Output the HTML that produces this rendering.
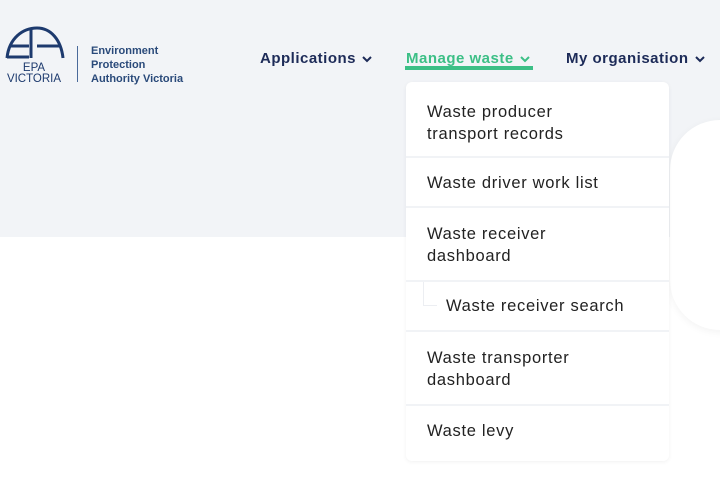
<!DOCTYPE html>
<html><head><meta charset="utf-8"><style>
*{margin:0;padding:0;box-sizing:border-box}
body{width:720px;height:496px;overflow:hidden;background:#fff;font-family:"Liberation Sans",sans-serif;position:relative}
.hdr{position:absolute;left:0;top:0;width:720px;height:237px;background:#f2f4f7}
.card{position:absolute;left:670px;top:120px;width:120px;height:210px;background:#fff;border-radius:50px;box-shadow:0 2px 8px rgba(0,0,0,.05)}
.nav{position:absolute;top:50px;font-weight:bold;font-size:15px;color:#1d2b58;white-space:nowrap;letter-spacing:0.5px}
.nav svg{vertical-align:middle;margin-left:6px}
.green{color:#3cbf86}
.ul{position:absolute;left:405px;top:66px;width:128px;height:4px;background:#3cbf86}
.dd{position:absolute;left:406px;top:82px;width:263px;height:379px;background:#fff;border-radius:6px;box-shadow:0 1px 4px rgba(0,0,0,.06)}
.it{position:absolute;left:0;width:263px;border-bottom:2px solid #f1f3f6;font-size:16.5px;color:#222;line-height:22px;padding-left:21px;letter-spacing:0.7px}
.logo-t{position:absolute;left:91px;top:44px;font-size:11px;line-height:14px;color:#2a4a7a;font-weight:bold}
</style></head><body>
<div class="hdr"></div>
<div class="card"></div>
<svg style="position:absolute;left:3px;top:24px" width="62" height="40" viewBox="0 0 62 40">
<path d="M4 34 C6 14 20 4 34 4 C48 4 58 16 60 34" fill="none" stroke="#1d3a6e" stroke-width="3"/>
<path d="M28 4 V34" stroke="#1d3a6e" stroke-width="3"/>
<path d="M6 22 H26 M4 33 H26" stroke="#1d3a6e" stroke-width="3"/>
<path d="M34 22 H58" stroke="#1d3a6e" stroke-width="3"/>
</svg>
<div style="position:absolute;left:4px;top:63px;width:60px;text-align:center;font-size:11.5px;line-height:11px;color:#1d3a6e">EPA<br>VICTORIA</div>
<div style="position:absolute;left:77px;top:46px;width:1px;height:36px;background:#4a6a9a"></div>
<div class="logo-t">Environment<br>Protection<br>Authority Victoria</div>
<div class="nav" style="left:260px">Applications<svg width="10" height="7" viewBox="0 0 10 7"><path d="M1 1l4 4 4-4" fill="none" stroke="#1d2b58" stroke-width="2"/></svg></div>
<div class="nav green" style="left:406px">Manage waste<svg width="10" height="7" viewBox="0 0 10 7"><path d="M1 1l4 4 4-4" fill="none" stroke="#3cbf86" stroke-width="2"/></svg></div>
<div class="ul"></div>
<div class="nav" style="left:566px">My organisation<svg width="10" height="7" viewBox="0 0 10 7"><path d="M1 1l4 4 4-4" fill="none" stroke="#1d2b58" stroke-width="2"/></svg></div>
<div class="dd">
<div class="it" style="top:0;height:76px;padding-top:19px">Waste producer<br>transport records</div>
<div class="it" style="top:76px;height:50px;padding-top:14px">Waste driver work list</div>
<div class="it" style="top:126px;height:74px;padding-top:15px">Waste receiver<br>dashboard</div>
<div class="it" style="top:200px;height:50px;padding-top:13px;padding-left:40px">Waste receiver search
<div style="position:absolute;left:17px;top:0;width:14px;height:24px;border-left:1px solid #eceef2;border-bottom:1px solid #eceef2"></div></div>
<div class="it" style="top:250px;height:74px;padding-top:15px">Waste transporter<br>dashboard</div>
<div class="it" style="top:324px;height:55px;border:none;padding-top:14px">Waste levy</div>
</div>
</body></html>
